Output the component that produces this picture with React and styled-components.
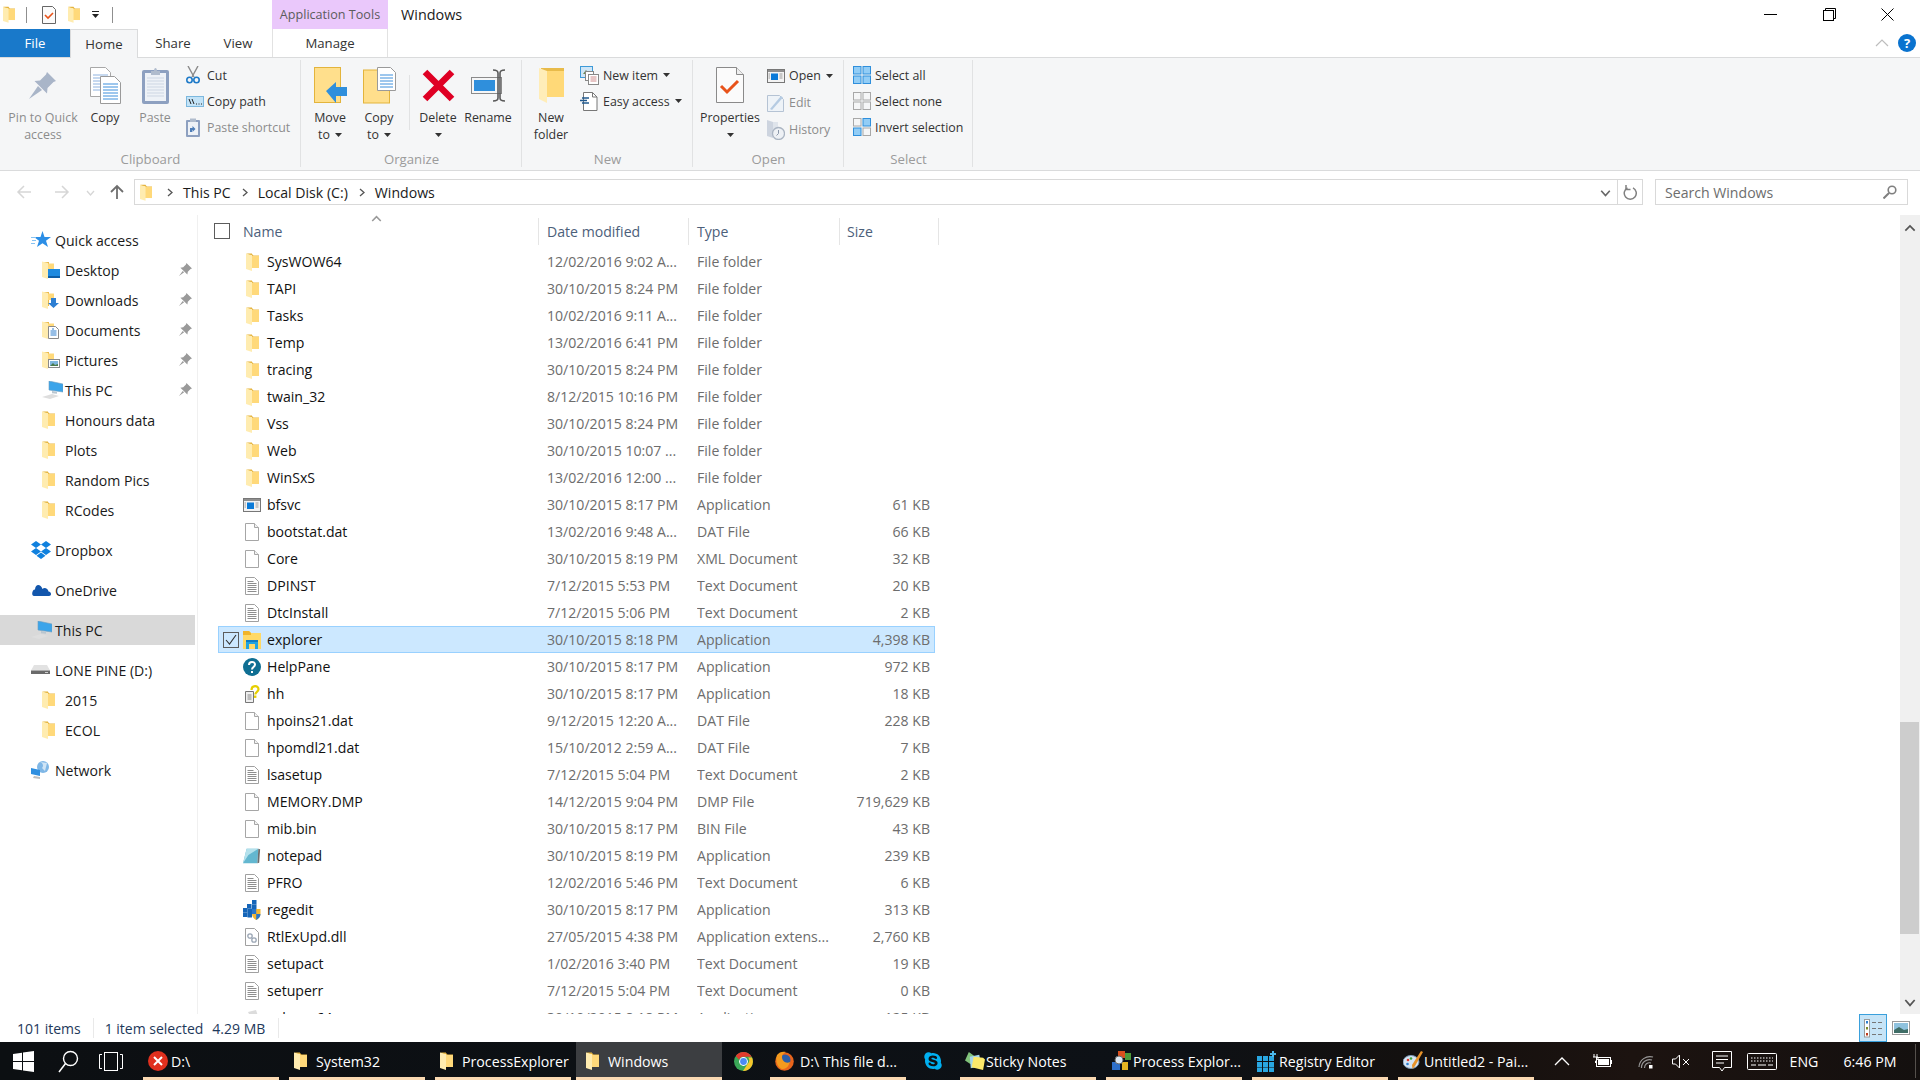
import styled, { createGlobalStyle } from "styled-components"
import { FaSkype } from "react-icons/fa"

const Global = createGlobalStyle`
  html, body { margin: 0; padding: 0; background: #fff; }
  body { font-family: "Open Sans", "Noto Sans", sans-serif; font-size: 14px; color: #000; }
  * { box-sizing: border-box; }
`

const Page = styled.div`
  width: 1920px;
  height: 1080px;
  display: flex;
  flex-direction: column;
  overflow: hidden;
`

/* ---- icons ---- */

const Folder = ({ w = 13, h = 18 }) => (
  <svg width={w} height={h} viewBox="0 0 13 18">
    <path d="M1 1h5l1.500 1.500H13V14H1z" fill="#e9b949" />
    <path d="M5 3h8v12H5z" fill="#ffd97a" />
    <path d="M0 .5l6 1.600V18L0 16z" fill="#ffecb0" />
    <path d="M0 .5h6v1.600z" fill="#e3b23c" />
  </svg>
)

const FolderWith = ({ children }) => (
  <svg width="18" height="18" viewBox="0 0 18 18">
    <path d="M1 1h6v14H1z" fill="#e9b949" />
    <path d="M0 .5l6 1.600V18L0 16z" fill="#ffecb0" />
    <path d="M6 2.500h6V9H6z" fill="#ffd97a" />
    {children}
  </svg>
)

const BlankFile = () => (
  <svg width="16" height="18" viewBox="0 0 16 18">
    <path d="M1.500.5h9l4 4v13h-13z" fill="#fff" stroke="#a6a6a6" />
    <path d="M10.500.5v4h4" fill="#f2f2f2" stroke="#a6a6a6" />
  </svg>
)

const TextFile = () => (
  <svg width="16" height="18" viewBox="0 0 16 18">
    <path d="M1.500.5h9l4 4v13h-13z" fill="#fff" stroke="#a0a0a0" />
    <path d="M3.500 4.500h6M3.500 6.500h9M3.500 8.500h9M3.500 10.500h9M3.500 12.500h9M3.500 14.500h9" stroke="#8e8e8e" />
  </svg>
)

const AppFile = () => (
  <svg width="18" height="14" viewBox="0 0 18 14">
    <rect x=".5" y=".5" width="17" height="13" fill="#f3f3f3" stroke="#777" />
    <path d="M1 1h16v2H1z" fill="#8f8f8f" />
    <rect x="4" y="4.500" width="7" height="6.500" fill="#0a7ad8" />
    <path d="M12.500 5h3M12.500 7h3M12.500 9h3M1.500 5h1.500M1.500 7h1.500M1.500 9h1.500" stroke="#9b9b9b" />
  </svg>
)

const ExplorerIcon = () => (
  <svg width="18" height="18" viewBox="0 0 18 18">
    <path d="M0 0h6l2 2h10v16H0z" fill="#ffd966" />
    <path d="M0 0h6l2 2v2H0z" fill="#f0b429" />
    <path d="M3 9h12v9h-3v-5H6v5H3z" fill="#21a4e0" />
    <path d="M3 9h12v2H3z" fill="#0f7cc2" />
  </svg>
)

const HelpIcon = () => (
  <svg width="18" height="18" viewBox="0 0 18 18">
    <circle cx="9" cy="9" r="9" fill="#0f6f93" />
    <path d="M6 7c0-4 6-4 6-.5 0 2.500-3 2.500-3 5" fill="none" stroke="#fff" strokeWidth="2" />
    <rect x="8" y="13" width="2" height="2" fill="#fff" />
  </svg>
)

const HhIcon = () => (
  <svg width="16" height="18" viewBox="0 0 16 18">
    <path d="M1.500 6.500h8v11h-8z" fill="#efefef" stroke="#777" />
    <path d="M3.500 10h4M3.500 12h4M3.500 14h4" stroke="#888" />
    <path d="M7.500 5c0-5 7-5 7-.8 0 2.600-3.200 2.600-3.200 5.300" fill="none" stroke="#e6cf00" strokeWidth="2.200" />
    <rect x="10" y="10.500" width="2.400" height="2.400" fill="#e6cf00" />
  </svg>
)

const NotepadIcon = () => (
  <svg width="20" height="18" viewBox="0 0 20 18">
    <path d="M4 1h13l-1 16H0z" fill="#63b7d0" />
    <path d="M4 1h13L6 8 0 17z" fill="#b4e1ec" />
    <path d="M17 1l2 .5-1 15-2 .5z" fill="#6e6e6e" />
  </svg>
)

const RegeditIcon = () => (
  <svg width="18" height="20" viewBox="0 0 18 20">
    <g fill="#1565b8">
      <rect x="9" y="0" width="4.500" height="4.500" />
      <rect x="4" y="4" width="4.500" height="4.500" />
      <rect x="9" y="4.500" width="4.500" height="4.500" />
      <rect x="0" y="8" width="4.500" height="4.500" />
      <rect x="4.500" y="8.500" width="4.500" height="4.500" />
      <rect x="0" y="12.500" width="4.500" height="4.500" />
      <rect x="4.500" y="13" width="4.500" height="4.500" />
    </g>
    <path d="M9 9h8.500v5c0 3-2.200 5-4.200 6-2-1-4.300-3-4.300-6z" fill="#f2b632" />
    <path d="M9 9h4.200v5H9zM13.200 14h4.300c0 3-2.200 5-4.300 6z" fill="#2a76c9" />
  </svg>
)

const DllIcon = () => (
  <svg width="16" height="18" viewBox="0 0 16 18">
    <path d="M1.500.5h9l4 4v13h-13z" fill="#fff" stroke="#a0a0a0" />
    <circle cx="6" cy="8" r="2.200" fill="none" stroke="#9aa5b4" strokeWidth="1.300" />
    <circle cx="10" cy="12" r="2.200" fill="none" stroke="#9aa5b4" strokeWidth="1.300" />
  </svg>
)

const Splw = () => (
  <svg width="16" height="18" viewBox="0 0 16 18">
    <path d="M4 3l8-2 2 6H6z" fill="#dcdcdc" />
  </svg>
)

const fileIcons = {
  folder: <Folder />,
  blank: <BlankFile />,
  text: <TextFile />,
  app: <AppFile />,
  explorer: <ExplorerIcon />,
  help: <HelpIcon />,
  hh: <HhIcon />,
  notepad: <NotepadIcon />,
  regedit: <RegeditIcon />,
  dll: <DllIcon />,
  splw: <Splw />,
}

const PinSmall = () => (
  <svg width="13" height="13" viewBox="0 0 14 14">
    <path d="M8 0l6 6-1.500.5L9.500 9.500 9 12.500l-7.500-7.500L4.500 4.500 7.500 1.500zM4 8.500L0 14l5.500-4z" fill="#9a9a9a" />
  </svg>
)

const StarIcon = () => (
  <svg width="20" height="18" viewBox="0 0 20 18">
    <path d="M11.500 0l2 6H20l-5 3.800L17 16l-5.500-3.800L6 16l2-6.200L3 6h6.500z" fill="#2b8ee6" />
    <path d="M0 6.500h5M1 9.500h4M0 12.500h4" stroke="#86c2f2" />
  </svg>
)

const DesktopIcon = () => (
  <FolderWith>
    <rect x="6" y="8" width="12" height="9" fill="#1e8ae0" />
    <rect x="6" y="15" width="12" height="2" fill="#0d5ea8" />
  </FolderWith>
)

const DownloadsIcon = () => (
  <FolderWith>
    <path d="M9 7h5v5h3l-5.500 5L6 12h3z" fill="#2d7fd3" />
  </FolderWith>
)

const DocumentsIcon = () => (
  <FolderWith>
    <path d="M6.500 5.500h7l3 3v9h-10z" fill="#fff" stroke="#8a8a8a" />
    <path d="M8.500 10h6M8.500 12h6M8.500 14h6M10 8h2" stroke="#2e7fce" />
  </FolderWith>
)

const PicturesIcon = () => (
  <FolderWith>
    <rect x="6.500" y="8.500" width="11" height="8" fill="#fff" stroke="#8a8a8a" />
    <path d="M8 10h8v5H8z" fill="#7fb6de" />
    <path d="M8 15l3-3 2 2 3-1v2z" fill="#4b7a4b" />
  </FolderWith>
)

const PcIcon = () => (
  <svg width="21" height="18" viewBox="0 0 21 18">
    <path d="M7 0l14 3v8L7 9z" fill="#3ba4ea" stroke="#6d9dc0" strokeWidth=".6" />
    <path d="M10 10l5 .8v2l-5-.6z" fill="#b9c6d0" />
    <path d="M0 16l10-3 7 2-9 3z" fill="#dedede" />
  </svg>
)

const DropboxIcon = () => (
  <svg width="20" height="18" viewBox="0 0 20 18">
    <path d="M5 0l5 3.500L5 7 0 3.500zM15 0l5 3.500L15 7l-5-3.500zM5 7l5 3.500L5 14l-5-3.500zM15 7l5 3.500L15 14l-5-3.500zM10 11.500l4.500 3.300L10 18l-4.500-3.200z" fill="#1081de" />
  </svg>
)

const OneDriveIcon = () => (
  <svg width="20" height="14" viewBox="0 0 20 14">
    <path d="M3 13h15c3 0 2.500-4.500-.5-4.500C17 5 13 4 11.500 6 9.500 0 4 1 4 6.500 1 6.500 0 13 3 13z" fill="#1256ac" />
  </svg>
)

const DriveIcon = () => (
  <svg width="19" height="10" viewBox="0 0 19 10">
    <path d="M3 0h13l3 5.500H0z" fill="#e2e2e2" />
    <path d="M0 5.500h19V9H0z" fill="#6a6a6a" />
    <path d="M14 7.500h3" stroke="#cfcfcf" />
  </svg>
)

const NetworkIcon = () => (
  <svg width="20" height="18" viewBox="0 0 20 18">
    <circle cx="12" cy="6" r="6" fill="#7fb7e6" />
    <path d="M9 1c3 1 4 4 2 6l3 3 2-8z" fill="#cfe4f5" />
    <path d="M0 7l9 2v6L0 13z" fill="#2f8fe0" />
    <path d="M3 15l6 1v2l-7-1z" fill="#bdbdbd" />
  </svg>
)

const BigPin = () => (
  <svg width="28" height="28" viewBox="0 0 28 28">
    <path d="M18 1l9 9-2.500 1-6 6-.5 5.500L5.500 10l5.500-.5 6-6z" fill="#a9b5c8" />
    <path d="M9 15L0 28l13-9z" fill="#a9b5c8" />
  </svg>
)

const BigCopy = () => (
  <svg width="31" height="37" viewBox="0 0 31 37">
    <path d="M.5.500h15l5 5v24H.5z" fill="#fff" stroke="#a8a8a8" />
    <path d="M3 8h15M3 11h15M3 14h15M3 17h15M3 20h15M3 23h15" stroke="#8fb3e0" />
    <path d="M10.500 9.500h14l6 6v21h-20z" fill="#fff" stroke="#9a9a9a" />
    <path d="M13 17h15M13 20h15M13 23h15M13 26h15M13 29h15M13 32h15" stroke="#3d8fdc" />
  </svg>
)

const BigPaste = () => (
  <svg width="27" height="37" viewBox="0 0 27 37">
    <rect x="0" y="3" width="27" height="34" rx="2" fill="#8da0c0" />
    <rect x="3" y="6" width="21" height="28" fill="#eef2f7" />
    <path d="M5 11h17M5 14h17M5 17h17M5 20h17M5 23h17M5 26h17M5 29h17" stroke="#cdd6e3" />
    <path d="M9 4h3c0-4 3-4 3 0h3v4H9z" fill="#b0bccd" />
  </svg>
)

const CutIcon = () => (
  <svg width="14" height="18" viewBox="0 0 14 18">
    <path d="M2 0l6 11M12 0L6 11" stroke="#8a8a8a" strokeWidth="1.400" fill="none" />
    <circle cx="3.500" cy="14" r="2.700" fill="none" stroke="#1e7ac8" strokeWidth="1.600" />
    <circle cx="10.500" cy="14" r="2.700" fill="none" stroke="#1e7ac8" strokeWidth="1.600" />
  </svg>
)

const CopyPathIcon = () => (
  <svg width="18" height="11" viewBox="0 0 18 11">
    <rect x=".5" y=".5" width="17" height="10" fill="#c3e3f7" stroke="#7cb8de" />
    <path d="M3 3l2 5M6 3l2 5" stroke="#222" />
    <path d="M10 8h1M12.500 8h1M15 8h1" stroke="#222" />
  </svg>
)

const PasteShortcutIcon = () => (
  <svg width="14" height="19" viewBox="0 0 14 19">
    <rect y="2" width="14" height="17" rx="1" fill="#8da0c0" />
    <rect x="2" y="4" width="10" height="13" fill="#eef2f7" />
    <path d="M4 .5h6V4H4z" fill="#b0bccd" />
    <path d="M4 14V10h2.500V8l3 3-3 3v-2H6v2z" fill="#4f7eb8" />
  </svg>
)

const BigMove = () => (
  <svg width="33" height="37" viewBox="0 0 33 37">
    <rect x=".5" y=".5" width="26" height="35" fill="#ffdf8c" stroke="#e3b43c" />
    <path d="M12 24l10-9v5h11v9H22v7z" fill="#2f8fdc" />
  </svg>
)

const BigCopyTo = () => (
  <svg width="33" height="37" viewBox="0 0 33 37">
    <rect x=".5" y="3" width="26" height="33" fill="#ffdf8c" stroke="#e3b43c" />
    <path d="M14.500.500h13l5 5v18h-18z" fill="#fff" stroke="#9a9a9a" />
    <path d="M17 8h13M17 11h13M17 14h13M17 17h13M17 20h13" stroke="#3d8fdc" />
  </svg>
)

const BigDelete = () => (
  <svg width="33" height="33" viewBox="0 0 33 33">
    <path d="M3 3l27 27M30 3L3 30" stroke="#df0024" strokeWidth="6.500" />
  </svg>
)

const BigRename = () => (
  <svg width="35" height="33" viewBox="0 0 35 33">
    <rect x=".5" y="8.500" width="30" height="16" fill="#f5f6f7" stroke="#8a8a8a" />
    <rect x="3" y="11" width="21" height="11" fill="#2f8fdc" />
    <path d="M22 1c3 0 5 1 5 3v25c0 2-2 3-5 3M34 1c-3 0-5 1-5 3v25c0 2 2 3 5 3" fill="none" stroke="#5a5a5a" strokeWidth="1.600" />
  </svg>
)

const BigNewFolder = () => (
  <svg width="25" height="35" viewBox="0 0 25 35">
    <path d="M2 0h23v29H2z" fill="#e8bb4a" />
    <path d="M8 3h17v26H8z" fill="#ffd978" />
    <path d="M0 0l8 3v32l-8-4z" fill="#ffedb8" />
  </svg>
)

const NewItemIcon = () => (
  <svg width="19" height="19" viewBox="0 0 19 19">
    <rect x=".5" y=".5" width="12" height="11" fill="#cfe6f7" stroke="#3e9ad8" />
    <path d="M3 8l3-4 3 4z" fill="#6d8a4d" />
    <rect x="5.500" y="5.500" width="8" height="9" fill="#fff" stroke="#888" />
    <rect x="8.500" y="8.500" width="10" height="10" fill="#fff" stroke="#888" />
    <path d="M10.500 11h6M10.500 13h6M10.500 15h6" stroke="#d08c8c" />
  </svg>
)

const EasyIcon = () => (
  <svg width="18" height="19" viewBox="0 0 18 19">
    <path d="M3.500.5h9l4.500 4.500v13.500H3.500z" fill="#fff" stroke="#777" />
    <path d="M12.500.5V5H17" fill="none" stroke="#777" />
    <path d="M2 6h7M0 8.500h7M2 11h7" stroke="#20598e" strokeWidth="1.300" />
  </svg>
)

const BigProps = () => (
  <svg width="28" height="36" viewBox="0 0 28 36">
    <path d="M.5.500h20l7 7v28H.5z" fill="#fbfbfb" stroke="#8a8a8a" />
    <path d="M20.500.500v7h7" fill="#eee" stroke="#8a8a8a" />
    <path d="M5 19l6 6 11-11" fill="none" stroke="#e8531a" strokeWidth="3" />
  </svg>
)

const SmallProps = () => (
  <svg width="14" height="18" viewBox="0 0 14 18">
    <path d="M.5.500h10l3 3v14H.5z" fill="#fbfbfb" stroke="#666" />
    <path d="M3 9l3 3 5-5" fill="none" stroke="#e8531a" strokeWidth="1.600" />
  </svg>
)

const EditIcon = () => (
  <svg width="18" height="18" viewBox="0 0 18 18">
    <path d="M.5 1.500h12l4 4v12H.5z" fill="#eef3f8" stroke="#b5c3d4" />
    <path d="M3 15L14 2l2 1.500L5 16z" fill="#b5cbe2" />
  </svg>
)

const HistoryIcon = () => (
  <svg width="18" height="20" viewBox="0 0 18 20">
    <path d="M0 0l6 2v16l-6-2z" fill="#cdd4df" />
    <path d="M6 2h5v12H6z" fill="#dfe4eb" />
    <circle cx="11.500" cy="13.500" r="6" fill="#eef1f5" stroke="#aab4c2" strokeWidth="1.300" />
    <path d="M11.500 10v3.500l-2 2" fill="none" stroke="#8a96a8" />
  </svg>
)

const SelectIcon = ({ cells }) => (
  <svg width="18" height="18" viewBox="0 0 18 18">
    {[[0, 0], [9.5, 0], [0, 9.5], [9.5, 9.5]].map(([x, y], i) => (
      <rect
        key={i}
        x={x + 0.5}
        y={y + 0.5}
        width="7.500"
        height="7.500"
        fill={cells[i] ? "#92cdf6" : "#f5f6f7"}
        stroke={cells[i] ? "#2f8fdc" : "#a8a8a8"}
      />
    ))}
  </svg>
)

const Chev = ({ dir = "right", color = "#555", size = 9 }) => {
  const d = {
    right: "M3 1l4 3.500L3 8",
    down: "M1 3l3.500 4L8 3",
    up: "M1 6.500L4.500 3 8 6.500",
  }[dir]
  return (
    <svg width={size} height={size} viewBox="0 0 9 9">
      <path d={d} fill="none" stroke={color} strokeWidth="1.300" />
    </svg>
  )
}

const Caret = () => (
  <svg width="7" height="4" viewBox="0 0 7 4">
    <path d="M0 0h7L3.500 4z" fill="#333" />
  </svg>
)

const NavArrow = ({ dir, color }) => (
  <svg width="16" height="16" viewBox="0 0 16 16">
    {dir === "up" ? (
      <path d="M8 15V2M2 8l6-6 6 6" fill="none" stroke={color} strokeWidth="1.800" />
    ) : dir === "left" ? (
      <path d="M15 8H2M8 2L2 8l6 6" fill="none" stroke={color} strokeWidth="1.500" />
    ) : (
      <path d="M1 8h13M8 2l6 6-6 6" fill="none" stroke={color} strokeWidth="1.500" />
    )}
  </svg>
)

const RefreshIcon = () => (
  <svg width="14" height="15" viewBox="0 0 14 15">
    <path d="M4.500 2.800A6 6 0 1 0 10 2.800" fill="none" stroke="#808080" strokeWidth="1.500" />
    <path d="M3 0v4.500h4.500" fill="none" stroke="#808080" strokeWidth="1.500" />
  </svg>
)

const SearchGlass = () => (
  <svg width="14" height="14" viewBox="0 0 14 14">
    <circle cx="9" cy="5" r="3.800" fill="none" stroke="#7f7f7f" strokeWidth="1.600" />
    <path d="M6 8l-5.500 5.500" stroke="#7f7f7f" strokeWidth="2" />
  </svg>
)

const DetailsView = () => (
  <svg width="19" height="19" viewBox="0 0 19 19">
    <rect x=".5" y=".5" width="5" height="17.500" fill="#fff" stroke="#9a9a9a" />
    <rect x="2" y="2" width="2" height="2.500" fill="#2f7fcf" />
    <rect x="2" y="8" width="2" height="2.500" fill="#7b8a2a" />
    <rect x="2" y="14" width="2" height="2.500" fill="#c03a1a" />
    <path d="M8 3.500h4M14 3.500h4M8 9.500h4M14 9.500h4M8 15.500h4M14 15.500h4" stroke="#777" />
  </svg>
)

const LargeView = () => (
  <svg width="18" height="14" viewBox="0 0 18 14">
    <rect x=".5" y=".5" width="17" height="13" fill="#fff" stroke="#9a9a9a" />
    <rect x="2" y="2" width="14" height="10" fill="#8fc2de" />
    <path d="M2 9l5-3 5 3 4-1v4H2z" fill="#3f6d66" />
  </svg>
)

const WinLogo = () => (
  <svg width="21" height="21" viewBox="0 0 21 21">
    <path d="M0 3l9-1.300V10H0zM10 1.500L21 0v10H10zM0 11h9v8.300L0 18zM10 11h11v10l-11-1.500z" fill="#fff" />
  </svg>
)

const TaskSearch = () => (
  <svg width="21" height="23" viewBox="0 0 21 23">
    <circle cx="12.500" cy="8.500" r="7" fill="none" stroke="#fff" strokeWidth="1.400" />
    <path d="M7.500 13.500L1 22" stroke="#fff" strokeWidth="1.500" />
  </svg>
)

const TaskView = () => (
  <svg width="24" height="19" viewBox="0 0 24 19">
    <rect x="5.500" y=".5" width="13" height="18" fill="none" stroke="#fff" />
    <path d="M3 2.500H.5v14H3M21 2.500h2.500v14H21" fill="none" stroke="#fff" />
  </svg>
)

const ErrorIcon = () => (
  <svg width="20" height="20" viewBox="0 0 20 20">
    <circle cx="10" cy="10" r="10" fill="#e0301e" />
    <path d="M6 6l8 8M14 6l-8 8" stroke="#fff" strokeWidth="2" />
  </svg>
)

const ChromeIcon = () => (
  <svg width="19" height="19" viewBox="0 0 19 19">
    <circle cx="9.500" cy="9.500" r="9.500" fill="#3aa757" />
    <path d="M9.500 0a9.500 9.500 0 0 1 8.200 4.800H9.500a4.800 4.800 0 0 0-4.500 3L1.800 4A9.500 9.500 0 0 1 9.500 0z" fill="#e33b2e" />
    <path d="M18 5.500A9.500 9.500 0 0 1 9 19l4.500-7a4.800 4.800 0 0 0 .6-6.500z" fill="#f7c52b" />
    <circle cx="9.500" cy="9.500" r="4.400" fill="#fff" />
    <circle cx="9.500" cy="9.500" r="3.400" fill="#4a8af4" />
  </svg>
)

const FirefoxIcon = () => (
  <svg width="19" height="20" viewBox="0 0 19 20">
    <circle cx="9.500" cy="10.500" r="9.300" fill="#e8651c" />
    <circle cx="10" cy="9" r="5.500" fill="#2a5ea8" />
    <path d="M2 4c2-3 6-4 9-3-3 1-4 3-4 5 0 4 4 7 8 5-1 3-3 7-7 7C4 18-.5 11 2 4z" fill="#f39a1e" />
  </svg>
)

const StickyIcon = () => (
  <svg width="20" height="19" viewBox="0 0 21 20">
    <path d="M4 0l7 5-5 8-6-4z" fill="#80c27a" />
    <path d="M5 5l10-2 2 12-11 2z" fill="#a6d6e8" />
    <path d="M9 5l10 1 2 2-2 11-12-3z" fill="#fbe86a" />
  </svg>
)

const ProcExpIcon = () => (
  <svg width="20" height="20" viewBox="0 0 20 20">
    <path d="M7 0h7v7H7z" fill="#d9501e" />
    <path d="M14 2h6v7h-6z" fill="#4b9a3a" />
    <path d="M1 11h8v8H1z" fill="#2d6fc9" />
    <path d="M11 11h6v8h-6z" fill="#e6b422" />
    <circle cx="8" cy="9" r="4" fill="#dce9f5" stroke="#666" />
  </svg>
)

const RegistryIcon = () => (
  <svg width="19" height="21" viewBox="0 0 19 21">
    <g fill="#29a7e1">
      <rect x="0" y="5" width="5" height="5" />
      <rect x="6" y="5" width="5" height="5" />
      <rect x="12" y="5" width="5" height="5" />
      <rect x="0" y="11" width="5" height="5" />
      <rect x="6" y="11" width="5" height="5" />
      <rect x="12" y="11" width="5" height="5" />
      <rect x="0" y="16.500" width="5" height="4.500" />
      <rect x="6" y="16.500" width="5" height="4.500" />
      <rect x="12" y="16.500" width="5" height="4.500" />
    </g>
    <path d="M15 0h2v2h2v2h-2v2h-2V4h-2V2h2z" fill="#4bb8ea" />
  </svg>
)

const PaintIcon = () => (
  <svg width="20" height="20" viewBox="0 0 20 20">
    <ellipse cx="8" cy="11" rx="8" ry="6.500" fill="#d6e6f5" stroke="#7d9ab8" />
    <circle cx="5" cy="9" r="1.300" fill="#e23b2e" />
    <circle cx="8" cy="7.500" r="1.300" fill="#3da63d" />
    <circle cx="4.500" cy="13" r="1.300" fill="#2f7fcf" />
    <path d="M18 0l2 1-8 14-2.500 3-.5-4z" fill="#e8932a" />
  </svg>
)

const CaretUp = () => (
  <svg width="16" height="9" viewBox="0 0 16 9">
    <path d="M1 8l7-7 7 7" fill="none" stroke="#fff" strokeWidth="1.300" />
  </svg>
)

const BatteryIcon = () => (
  <svg width="20" height="14" viewBox="0 0 20 14">
    <path d="M2 0v3M5 0v3M1 3h5v2L3.500 7M3.500 7v2" fill="none" stroke="#fff" />
    <rect x="4.500" y="3.500" width="14" height="9" fill="none" stroke="#fff" />
    <rect x="6" y="5" width="11" height="6" fill="#fff" />
    <rect x="19" y="6" width="1" height="4" fill="#fff" />
  </svg>
)

const WifiIcon = () => (
  <svg width="16" height="15" viewBox="0 0 16 15">
    <path d="M1 13A11 11 0 0 1 15 3M3.500 14A8 8 0 0 1 14 6M6.500 14A5 5 0 0 1 13 9" fill="none" stroke="#9a9a9a" strokeWidth="1.200" />
    <rect x="11" y="11" width="3.500" height="3.500" fill="#fff" />
  </svg>
)

const SpeakerIcon = () => (
  <svg width="18" height="15" viewBox="0 0 18 15">
    <path d="M.5 5h3L7.500 1v13l-4-4h-3z" fill="none" stroke="#fff" />
    <path d="M11 5l6 6M17 5l-6 6" stroke="#fff" />
  </svg>
)

const NotifIcon = () => (
  <svg width="20" height="21" viewBox="0 0 20 21">
    <path d="M.5.500h19v16h-7L10 20l-2.500-3.500h-7z" fill="none" stroke="#fff" />
    <path d="M4 5h12M4 8.500h12M4 12h8" stroke="#fff" />
  </svg>
)

const KeyboardIcon = () => (
  <svg width="30" height="17" viewBox="0 0 30 17">
    <rect x=".5" y=".5" width="29" height="16" rx="1" fill="none" stroke="#fff" />
    <path d="M4 5h22M4 8h22" stroke="#fff" strokeDasharray="1.500 1.500" />
    <path d="M4 12h5M11 12h8M21 12h5" stroke="#fff" />
  </svg>
)

/* ---- title bar ---- */

const TitleBar = styled.div`
  display: flex;
  align-items: stretch;
  height: 29px;
  flex: none;
`

const Qat = styled.div`
  width: 272px;
  display: flex;
  align-items: center;
  padding-left: 3px;
`

const QatItem = styled.span`
  display: flex;
  align-items: center;
  justify-content: center;
  width: ${(p) => p.$w}px;
  margin-left: ${(p) => p.$ml || 0}px;
`

const QatSep = styled.span`
  width: 1px;
  height: 16px;
  background: #8f8f8f;
  margin-left: ${(p) => p.$ml}px;
`

const ContextLabel = styled.div`
  width: 116px;
  background: #eac8fb;
  color: #5c5c5c;
  font-size: 12.6px;
  display: flex;
  align-items: center;
  justify-content: center;
`

const WindowTitle = styled.div`
  margin-left: 13px;
  font-size: 14.4px;
  color: #1a1a1a;
  line-height: 29px;
`

const WinButtons = styled.div`
  margin-left: auto;
  display: flex;
  padding-right: 3px;
`

const WinButton = styled.button`
  width: 58.5px;
  border: none;
  background: none;
  padding: 0;
  display: flex;
  align-items: center;
  justify-content: center;
`

/* ---- tabs ---- */

const TabRow = styled.div`
  display: flex;
  height: 29px;
  flex: none;
  border-bottom: 1px solid #dadbdc;
`

const Tab = styled.div`
  width: ${(p) => p.$w}px;
  height: ${(p) => (p.$active ? "29px" : "28px")};
  display: flex;
  align-items: center;
  justify-content: center;
  font-size: 13.2px;
  color: ${(p) => (p.$file ? "#fff" : "#333")};
  background: ${(p) => (p.$file ? "#1979ca" : p.$active ? "#f5f6f7" : "none")};
  border: ${(p) => (p.$active ? "1px solid #dadbdc" : "none")};
  border-bottom: none;
  border-left: ${(p) => (p.$ctx ? "1px solid #e2e2e2" : undefined)};
  border-right: ${(p) => (p.$ctx ? "1px solid #e2e2e2" : undefined)};
  margin-left: ${(p) => p.$ml || 0}px;
`

const TabRight = styled.div`
  margin-left: auto;
  display: flex;
  align-items: center;
  gap: 9px;
  padding-right: 4px;
`

const HelpBadge = styled.span`
  width: 18px;
  height: 18px;
  border-radius: 50%;
  background: #0a73cf;
  color: #fff;
  font-size: 13px;
  font-weight: 700;
  line-height: 18px;
  text-align: center;
`

/* ---- ribbon ---- */

const Ribbon = styled.div`
  display: flex;
  height: 113px;
  flex: none;
  background: #f5f6f7;
  border-bottom: 1px solid #dadbdc;
`

const Group = styled.div`
  width: ${(p) => p.$w}px;
  display: flex;
  flex-direction: column;
  position: relative;
  &::after {
    content: "";
    position: absolute;
    right: 0;
    top: 2px;
    bottom: 3px;
    width: 1px;
    background: #e1e2e3;
  }
`

const GroupBody = styled.div`
  flex: 1;
  display: flex;
  align-items: flex-start;
  padding-left: ${(p) => p.$pl || 0}px;
`

const GroupLabel = styled.div`
  height: 26px;
  padding-top: 4px;
  text-align: center;
  font-size: 13.2px;
  color: #9b9b9b;
  line-height: 22px;
`

const BigButton = styled.div`
  width: ${(p) => p.$w}px;
  display: flex;
  flex-direction: column;
  align-items: center;
  padding-top: 8px;
  font-size: 12.4px;
  line-height: 17px;
  text-align: center;
  color: ${(p) => (p.$off ? "#8c8c8c" : "#333")};
`

const BigIcon = styled.div`
  height: 38px;
  margin-bottom: 5px;
  display: flex;
  align-items: center;
  justify-content: center;
`

const LabelLine = styled.div`
  display: flex;
  align-items: center;
  justify-content: center;
  gap: 5px;
  height: 17px;
  white-space: nowrap;
`

const SmallCol = styled.div`
  display: flex;
  flex-direction: column;
  padding-top: 4px;
`

const SmallButton = styled.div`
  display: flex;
  align-items: center;
  height: ${(p) => p.$h || 26}px;
  font-size: 12.4px;
  color: ${(p) => (p.$off ? "#8c8c8c" : "#333")};
  white-space: nowrap;
`

const SmallIcon = styled.span`
  width: ${(p) => p.$w || 22}px;
  flex: none;
  display: flex;
  align-items: center;
`

const SmallCaret = styled.span`
  display: flex;
  margin-left: 5px;
`

const VSep = styled.div`
  width: 1px;
  height: 55px;
  background: #e1e2e3;
  margin: 17px 6px 0 10px;
`

/* ---- address bar ---- */

const AddressRow = styled.div`
  display: flex;
  align-items: flex-start;
  height: 44px;
  flex: none;
  padding-top: 8px;
`

const NavButtons = styled.div`
  width: 134px;
  height: 26px;
  flex: none;
  display: flex;
  align-items: center;
`

const NavSlot = styled.span`
  display: flex;
  margin-left: ${(p) => p.$ml}px;
`

const AddressBox = styled.div`
  width: 1509px;
  height: 26px;
  border: 1px solid #d9d9d9;
  display: flex;
  align-items: center;
  padding-left: 5px;
  font-size: 14.1px;
  color: #1a1a1a;
`

const AddressFolder = styled.span`
  display: flex;
  margin-right: 13px;
`

const Crumb = styled.span`
  margin: 0 9px;
  white-space: nowrap;
`

const AddressEnd = styled.div`
  margin-left: auto;
  display: flex;
  align-items: center;
  height: 100%;
`

const DropSlot = styled.span`
  width: 24px;
  display: flex;
  justify-content: center;
  height: 100%;
  align-items: center;
  border-right: 1px solid #d9d9d9;
`

const RefreshSlot = styled.span`
  width: 24px;
  display: flex;
  justify-content: center;
`

const SearchBox = styled.div`
  width: 253px;
  height: 26px;
  margin-left: 12px;
  border: 1px solid #d9d9d9;
  display: flex;
  align-items: center;
  justify-content: space-between;
  padding: 0 10px 0 9px;
  font-size: 14.1px;
  color: #6d6d6d;
`

/* ---- main ---- */

const Main = styled.div`
  flex: 1;
  display: flex;
  min-height: 0;
`

const Nav = styled.nav`
  width: 198px;
  flex: none;
  padding: 10px 2px 0 0;
  border-right: 1px solid #f0f0f0;
  display: flex;
  flex-direction: column;
  gap: 10px;
`

const NavGroup = styled.div`
  display: flex;
  flex-direction: column;
`

const NavRow = styled.div`
  height: 30px;
  display: flex;
  align-items: center;
  position: relative;
  padding-left: ${(p) => (p.$child ? 65 : 55)}px;
  font-size: 14.1px;
  color: #1a1a1a;
  background: ${(p) => (p.$selected ? "#d9d9d9" : "none")};
`

const NavIcon = styled.span`
  position: absolute;
  left: ${(p) => (p.$child ? 42 : 31)}px;
  top: 50%;
  transform: translateY(-50%);
  display: flex;
`

const NavPin = styled.span`
  position: absolute;
  right: 3px;
  top: 8px;
  display: flex;
`

const Content = styled.div`
  flex: 1;
  min-width: 0;
  overflow: hidden;
  display: flex;
  flex-direction: column;
`

const HeaderRow = styled.div`
  height: 33px;
  flex: none;
  width: 741px;
  display: flex;
  align-items: stretch;
  padding: 3px 0 1px 16px;
  font-size: 14.1px;
  color: #4c607a;
`

const HeadCheck = styled.span`
  width: 16px;
  height: 16px;
  margin-top: 5px;
  border: 1px solid #5c5c5c;
  flex: none;
  background: #fff;
`

const HeadCell = styled.div`
  width: ${(p) => p.$w}px;
  position: relative;
  display: flex;
  align-items: center;
  padding-left: ${(p) => p.$pl}px;
  border-right: 1px solid #e5e5e5;
  margin-bottom: 2px;
`

const SortArrow = styled.span`
  position: absolute;
  left: 141px;
  top: -5px;
  display: flex;
`

const Rows = styled.div`
  flex: 1;
  min-height: 0;
  overflow: hidden;
  padding-left: 20px;
`

const FileRow = styled.div`
  width: 717px;
  height: 27px;
  display: grid;
  grid-template-columns: 24px 24px 280px 150px 150px 83px;
  align-items: center;
  font-size: 14.1px;
  color: #6d6d6d;
  border: 1px solid ${(p) => (p.$selected ? "#99d1ff" : "transparent")};
  background: ${(p) => (p.$selected ? "#cce8ff" : "none")};
`

const RowCheck = styled.span`
  width: 16px;
  height: 16px;
  margin-left: 4px;
  border: 1px solid #5c5c5c;
  display: flex;
`

const RowIcon = styled.span`
  display: flex;
  justify-content: center;
  width: 18px;
`

const RowName = styled.span`
  color: #111;
  white-space: nowrap;
`

const RowCell = styled.span`
  white-space: nowrap;
  overflow: hidden;
`

const RowSize = styled.span`
  text-align: right;
  white-space: nowrap;
`

const ScrollBar = styled.div`
  width: 20px;
  flex: none;
  background: #f0f0f0;
  display: flex;
  flex-direction: column;
`

const ScrollEnd = styled.div`
  height: 25px;
  flex: none;
  display: flex;
  align-items: center;
  justify-content: center;
`

const ScrollTrack = styled.div`
  flex: 1;
  padding-top: ${(p) => p.$offset}px;
`

const ScrollThumb = styled.div`
  width: 19px;
  height: ${(p) => p.$h}px;
  background: #cdcdcd;
`

/* ---- status bar ---- */

const StatusBar = styled.div`
  height: 28px;
  flex: none;
  display: flex;
  align-items: center;
  font-size: 14px;
  color: #1e395b;
`

const StatusText = styled.span`
  margin-left: ${(p) => p.$ml}px;
  white-space: nowrap;
`

const StatusSep = styled.span`
  width: 1px;
  height: 20px;
  background: #e9e9e9;
  margin-left: ${(p) => p.$ml}px;
`

const ViewButtons = styled.div`
  margin-left: auto;
  display: flex;
  align-items: center;
  height: 100%;
`

const ViewButton = styled.div`
  width: 28px;
  height: 28px;
  display: flex;
  align-items: center;
  justify-content: center;
  background: ${(p) => (p.$active ? "#c6e4f7" : "none")};
  border: 1px solid ${(p) => (p.$active ? "#3aa0dc" : "transparent")};
  margin-right: ${(p) => p.$mr || 0}px;
`

/* ---- taskbar ---- */

const Taskbar = styled.div`
  height: 38px;
  flex: none;
  display: flex;
  background: linear-gradient(90deg, #0c0f12 0%, #0d1116 60%, #14100e 75%, #1c1310 85%, #14100f 100%);
  color: #fff;
  font-size: 14.2px;
`

const SysButton = styled.div`
  width: ${(p) => p.$w}px;
  padding-right: ${(p) => p.$pr || 0}px;
  display: flex;
  align-items: center;
  justify-content: center;
`

const TaskItem = styled.div`
  width: ${(p) => p.$w || 146}px;
  flex: none;
  position: relative;
  display: flex;
  align-items: center;
  justify-content: ${(p) => (p.$center ? "center" : "flex-start")};
  gap: ${(p) => p.$gap ?? 6}px;
  padding-left: ${(p) => (p.$center ? 0 : 10)}px;
  background: ${(p) => (p.$active ? "#3c3e41" : "none")};
  white-space: nowrap;
  &::after {
    content: "";
    display: ${(p) => (p.$open ? "block" : "none")};
    position: absolute;
    left: ${(p) => (p.$active ? 0 : 5)}px;
    right: ${(p) => (p.$active ? 0 : 5)}px;
    bottom: 0;
    height: 3px;
    background: #fad9b2;
  }
`

const TaskIconBox = styled.span`
  display: flex;
  flex: none;
`

const TrayItem = styled.div`
  width: ${(p) => p.$w}px;
  margin-left: ${(p) => p.$ml || 0}px;
  flex: none;
  display: flex;
  align-items: center;
  justify-content: center;
  white-space: nowrap;
`

const TraySep = styled.div`
  width: 1px;
  height: 34px;
  margin: 2px 0 0 19px;
  background: #55504c;
`

/* ---- data ---- */

const quick = [
  ["Desktop", <DesktopIcon />, true],
  ["Downloads", <DownloadsIcon />, true],
  ["Documents", <DocumentsIcon />, true],
  ["Pictures", <PicturesIcon />, true],
  ["This PC", <PcIcon />, true],
  ["Honours data", <Folder />],
  ["Plots", <Folder />],
  ["Random Pics", <Folder />],
  ["RCodes", <Folder />],
]

const files = [
  ["SysWOW64", "12/02/2016 9:02 A...", "File folder", "", "folder"],
  ["TAPI", "30/10/2015 8:24 PM", "File folder", "", "folder"],
  ["Tasks", "10/02/2016 9:11 A...", "File folder", "", "folder"],
  ["Temp", "13/02/2016 6:41 PM", "File folder", "", "folder"],
  ["tracing", "30/10/2015 8:24 PM", "File folder", "", "folder"],
  ["twain_32", "8/12/2015 10:16 PM", "File folder", "", "folder"],
  ["Vss", "30/10/2015 8:24 PM", "File folder", "", "folder"],
  ["Web", "30/10/2015 10:07 ...", "File folder", "", "folder"],
  ["WinSxS", "13/02/2016 12:00 ...", "File folder", "", "folder"],
  ["bfsvc", "30/10/2015 8:17 PM", "Application", "61 KB", "app"],
  ["bootstat.dat", "13/02/2016 9:48 A...", "DAT File", "66 KB", "blank"],
  ["Core", "30/10/2015 8:19 PM", "XML Document", "32 KB", "blank"],
  ["DPINST", "7/12/2015 5:53 PM", "Text Document", "20 KB", "text"],
  ["DtcInstall", "7/12/2015 5:06 PM", "Text Document", "2 KB", "text"],
  ["explorer", "30/10/2015 8:18 PM", "Application", "4,398 KB", "explorer"],
  ["HelpPane", "30/10/2015 8:17 PM", "Application", "972 KB", "help"],
  ["hh", "30/10/2015 8:17 PM", "Application", "18 KB", "hh"],
  ["hpoins21.dat", "9/12/2015 12:20 A...", "DAT File", "228 KB", "blank"],
  ["hpomdl21.dat", "15/10/2012 2:59 A...", "DAT File", "7 KB", "blank"],
  ["lsasetup", "7/12/2015 5:04 PM", "Text Document", "2 KB", "text"],
  ["MEMORY.DMP", "14/12/2015 9:04 PM", "DMP File", "719,629 KB", "blank"],
  ["mib.bin", "30/10/2015 8:17 PM", "BIN File", "43 KB", "blank"],
  ["notepad", "30/10/2015 8:19 PM", "Application", "239 KB", "notepad"],
  ["PFRO", "12/02/2016 5:46 PM", "Text Document", "6 KB", "text"],
  ["regedit", "30/10/2015 8:17 PM", "Application", "313 KB", "regedit"],
  ["RtlExUpd.dll", "27/05/2015 4:38 PM", "Application extens...", "2,760 KB", "dll"],
  ["setupact", "1/02/2016 3:40 PM", "Text Document", "19 KB", "text"],
  ["setuperr", "7/12/2015 5:04 PM", "Text Document", "0 KB", "text"],
  ["splwow64", "30/10/2015 8:18 PM", "Application", "125 KB", "splw"],
]

function RibbonBar() {
  return (
    <Ribbon>
      <Group $w={301}>
        <GroupBody>
          <BigButton $w={86} $off>
            <BigIcon><BigPin /></BigIcon>
            <LabelLine>Pin to Quick</LabelLine>
            <LabelLine>access</LabelLine>
          </BigButton>
          <BigButton $w={38}>
            <BigIcon><BigCopy /></BigIcon>
            <LabelLine>Copy</LabelLine>
          </BigButton>
          <BigButton $w={62} $off>
            <BigIcon><BigPaste /></BigIcon>
            <LabelLine>Paste</LabelLine>
          </BigButton>
          <SmallCol>
            <SmallButton><SmallIcon $w={21}><CutIcon /></SmallIcon>Cut</SmallButton>
            <SmallButton><SmallIcon $w={21}><CopyPathIcon /></SmallIcon>Copy path</SmallButton>
            <SmallButton $off><SmallIcon $w={21}><PasteShortcutIcon /></SmallIcon>Paste shortcut</SmallButton>
          </SmallCol>
        </GroupBody>
        <GroupLabel>Clipboard</GroupLabel>
      </Group>
      <Group $w={221}>
        <GroupBody>
          <BigButton $w={58}>
            <BigIcon><BigMove /></BigIcon>
            <LabelLine>Move</LabelLine>
            <LabelLine>to <Caret /></LabelLine>
          </BigButton>
          <BigButton $w={40}>
            <BigIcon><BigCopyTo /></BigIcon>
            <LabelLine>Copy</LabelLine>
            <LabelLine>to <Caret /></LabelLine>
          </BigButton>
          <VSep />
          <BigButton $w={44}>
            <BigIcon><BigDelete /></BigIcon>
            <LabelLine>Delete</LabelLine>
            <LabelLine><Caret /></LabelLine>
          </BigButton>
          <BigButton $w={56}>
            <BigIcon><BigRename /></BigIcon>
            <LabelLine>Rename</LabelLine>
          </BigButton>
        </GroupBody>
        <GroupLabel>Organize</GroupLabel>
      </Group>
      <Group $w={171}>
        <GroupBody>
          <BigButton $w={58}>
            <BigIcon><BigNewFolder /></BigIcon>
            <LabelLine>New</LabelLine>
            <LabelLine>folder</LabelLine>
          </BigButton>
          <SmallCol>
            <SmallButton><SmallIcon $w={23}><NewItemIcon /></SmallIcon>New item<SmallCaret><Caret /></SmallCaret></SmallButton>
            <SmallButton><SmallIcon $w={23}><EasyIcon /></SmallIcon>Easy access<SmallCaret><Caret /></SmallCaret></SmallButton>
          </SmallCol>
        </GroupBody>
        <GroupLabel>New</GroupLabel>
      </Group>
      <Group $w={151}>
        <GroupBody>
          <BigButton $w={74}>
            <BigIcon><BigProps /></BigIcon>
            <LabelLine>Properties</LabelLine>
            <LabelLine><Caret /></LabelLine>
          </BigButton>
          <SmallCol>
            <SmallButton $h={27}><SmallIcon><AppFile /></SmallIcon>Open<SmallCaret><Caret /></SmallCaret></SmallButton>
            <SmallButton $h={27} $off><SmallIcon><EditIcon /></SmallIcon>Edit</SmallButton>
            <SmallButton $h={27} $off><SmallIcon><HistoryIcon /></SmallIcon>History</SmallButton>
          </SmallCol>
        </GroupBody>
        <GroupLabel>Open</GroupLabel>
      </Group>
      <Group $w={129}>
        <GroupBody $pl={9}>
          <SmallCol>
            <SmallButton><SmallIcon><SelectIcon cells={[1, 1, 1, 1]} /></SmallIcon>Select all</SmallButton>
            <SmallButton><SmallIcon><SelectIcon cells={[0, 0, 0, 0]} /></SmallIcon>Select none</SmallButton>
            <SmallButton><SmallIcon><SelectIcon cells={[0, 1, 1, 0]} /></SmallIcon>Invert selection</SmallButton>
          </SmallCol>
        </GroupBody>
        <GroupLabel>Select</GroupLabel>
      </Group>
    </Ribbon>
  )
}

function Navigation() {
  return (
    <Nav>
      <NavGroup>
        <NavRow>
          <NavIcon><StarIcon /></NavIcon>Quick access
        </NavRow>
        {quick.map(([label, icon, pinned]) => (
          <NavRow key={label} $child>
            <NavIcon $child>{icon}</NavIcon>
            {label}
            {pinned && <NavPin><PinSmall /></NavPin>}
          </NavRow>
        ))}
      </NavGroup>
      <NavRow><NavIcon><DropboxIcon /></NavIcon>Dropbox</NavRow>
      <NavRow><NavIcon><OneDriveIcon /></NavIcon>OneDrive</NavRow>
      <NavRow $selected><NavIcon><PcIcon /></NavIcon>This PC</NavRow>
      <NavGroup>
        <NavRow><NavIcon><DriveIcon /></NavIcon>LONE PINE (D:)</NavRow>
        <NavRow $child><NavIcon $child><Folder /></NavIcon>2015</NavRow>
        <NavRow $child><NavIcon $child><Folder /></NavIcon>ECOL</NavRow>
      </NavGroup>
      <NavRow><NavIcon><NetworkIcon /></NavIcon>Network</NavRow>
    </Nav>
  )
}

function FileList() {
  return (
    <Content>
      <HeaderRow>
        <HeadCheck />
        <HeadCell $w={309} $pl={13}>
          Name
          <SortArrow><Chev dir="up" color="#9a9a9a" size={11} /></SortArrow>
        </HeadCell>
        <HeadCell $w={150} $pl={8}>Date modified</HeadCell>
        <HeadCell $w={151} $pl={8}>Type</HeadCell>
        <HeadCell $w={99} $pl={7}>Size</HeadCell>
      </HeaderRow>
      <Rows>
        {files.map(([name, date, type, size, icon]) => {
          const selected = name === "explorer"
          return (
            <FileRow key={name} $selected={selected}>
              {selected ? (
                <RowCheck>
                  <svg width="14" height="14" viewBox="0 0 14 14">
                    <path d="M2 7l3.500 4L12 2" fill="none" stroke="#333" strokeWidth="1.100" />
                  </svg>
                </RowCheck>
              ) : (
                <span />
              )}
              <RowIcon>{fileIcons[icon]}</RowIcon>
              <RowName>{name}</RowName>
              <RowCell>{date}</RowCell>
              <RowCell>{type}</RowCell>
              <RowSize>{size}</RowSize>
            </FileRow>
          )
        })}
      </Rows>
    </Content>
  )
}

export default function App() {
  return (
    <Page>
      <Global />
      <TitleBar>
        <Qat>
          <QatItem $w={12}><Folder w={12} h={17} /></QatItem>
          <QatSep $ml={11} />
          <QatItem $w={14} $ml={15}><SmallProps /></QatItem>
          <QatItem $w={12} $ml={12}><Folder w={12} h={17} /></QatItem>
          <QatItem $w={7} $ml={12}>
            <svg width="7" height="7" viewBox="0 0 7 7">
              <path d="M0 0h7v1H0zM0 3h7L3.500 7z" fill="#222" />
            </svg>
          </QatItem>
          <QatSep $ml={13} />
        </Qat>
        <ContextLabel>Application Tools</ContextLabel>
        <WindowTitle>Windows</WindowTitle>
        <WinButtons>
          <WinButton aria-label="Minimize">
            <svg width="13" height="1" viewBox="0 0 13 1"><rect width="13" height="1" fill="#000" /></svg>
          </WinButton>
          <WinButton aria-label="Restore">
            <svg width="13" height="13" viewBox="0 0 13 13">
              <rect x=".5" y="2.500" width="10" height="10" fill="#fff" stroke="#000" />
              <path d="M2.500 2.500v-2h10v10h-2" fill="none" stroke="#000" />
            </svg>
          </WinButton>
          <WinButton aria-label="Close">
            <svg width="13" height="13" viewBox="0 0 13 13">
              <path d="M.5.500l12 12M12.500.500l-12 12" stroke="#000" />
            </svg>
          </WinButton>
        </WinButtons>
      </TitleBar>
      <TabRow>
        <Tab $w={70} $file>File</Tab>
        <Tab $w={68} $active>Home</Tab>
        <Tab $w={70}>Share</Tab>
        <Tab $w={60}>View</Tab>
        <Tab $w={116} $ml={4} $ctx>Manage</Tab>
        <TabRight>
          <svg width="14" height="8" viewBox="0 0 14 8">
            <path d="M1 7l6-6 6 6" fill="none" stroke="#bdbdbd" strokeWidth="1.200" />
          </svg>
          <HelpBadge>?</HelpBadge>
        </TabRight>
      </TabRow>
      <RibbonBar />
      <AddressRow>
        <NavButtons>
          <NavSlot $ml={16}><NavArrow dir="left" color="#d6d6d6" /></NavSlot>
          <NavSlot $ml={22}><NavArrow dir="right" color="#d6d6d6" /></NavSlot>
          <NavSlot $ml={16}><Chev dir="down" color="#d6d6d6" /></NavSlot>
          <NavSlot $ml={14}><NavArrow dir="up" color="#6e6e6e" /></NavSlot>
        </NavButtons>
        <AddressBox>
          <AddressFolder><Folder w={12} h={17} /></AddressFolder>
          <Chev />
          <Crumb>This PC</Crumb>
          <Chev />
          <Crumb>Local Disk (C:)</Crumb>
          <Chev />
          <Crumb>Windows</Crumb>
          <AddressEnd>
            <DropSlot><Chev dir="down" color="#666" size={11} /></DropSlot>
            <RefreshSlot><RefreshIcon /></RefreshSlot>
          </AddressEnd>
        </AddressBox>
        <SearchBox>
          Search Windows
          <SearchGlass />
        </SearchBox>
      </AddressRow>
      <Main>
        <Navigation />
        <FileList />
        <ScrollBar>
          <ScrollEnd><Chev dir="up" color="#555" size={12} /></ScrollEnd>
          <ScrollTrack $offset={482}><ScrollThumb $h={212} /></ScrollTrack>
          <ScrollEnd><Chev dir="down" color="#555" size={12} /></ScrollEnd>
        </ScrollBar>
      </Main>
      <StatusBar>
        <StatusText $ml={17}>101 items</StatusText>
        <StatusSep $ml={12} />
        <StatusText $ml={11}>1 item selected</StatusText>
        <StatusText $ml={9}>4.29 MB</StatusText>
        <StatusSep $ml={13} />
        <ViewButtons>
          <ViewButton $active><DetailsView /></ViewButton>
          <ViewButton $mr={5}><LargeView /></ViewButton>
        </ViewButtons>
      </StatusBar>
      <Taskbar>
        <SysButton $w={46}><WinLogo /></SysButton>
        <SysButton $w={44}><TaskSearch /></SysButton>
        <SysButton $w={48} $pr={6}><TaskView /></SysButton>
        <TaskItem $open $gap={3}><TaskIconBox><ErrorIcon /></TaskIconBox>D:\</TaskItem>
        <TaskItem $open $gap={9}><TaskIconBox><Folder /></TaskIconBox>System32</TaskItem>
        <TaskItem $open $gap={9}><TaskIconBox><Folder /></TaskIconBox>ProcessExplorer</TaskItem>
        <TaskItem $open $active $gap={9}><TaskIconBox><Folder /></TaskIconBox>Windows</TaskItem>
        <TaskItem $w={43} $center><ChromeIcon /></TaskItem>
        <TaskItem $open><TaskIconBox><FirefoxIcon /></TaskIconBox>D:\ This file d...</TaskItem>
        <TaskItem $w={44} $center><FaSkype size={20} color="#00aff0" /></TaskItem>
        <TaskItem $open $gap={1}><TaskIconBox><StickyIcon /></TaskIconBox>Sticky Notes</TaskItem>
        <TaskItem $open $gap={2}><TaskIconBox><ProcExpIcon /></TaskIconBox>Process Explor...</TaskItem>
        <TaskItem $open $gap={3}><TaskIconBox><RegistryIcon /></TaskIconBox>Registry Editor</TaskItem>
        <TaskItem $open $gap={1}><TaskIconBox><PaintIcon /></TaskIconBox>Untitled2 - Pai...</TaskItem>
        <TrayItem $w={42} $ml={2}><CaretUp /></TrayItem>
        <TrayItem $w={38}><BatteryIcon /></TrayItem>
        <TrayItem $w={50}><WifiIcon /></TrayItem>
        <TrayItem $w={20}><SpeakerIcon /></TrayItem>
        <TrayItem $w={30} $ml={16}><NotifIcon /></TrayItem>
        <TrayItem $w={32} $ml={9}><KeyboardIcon /></TrayItem>
        <TrayItem $w={30} $ml={11}>ENG</TrayItem>
        <TrayItem $w={52} $ml={25}>6:46 PM</TrayItem>
        <TraySep />
      </Taskbar>
    </Page>
  )
}
